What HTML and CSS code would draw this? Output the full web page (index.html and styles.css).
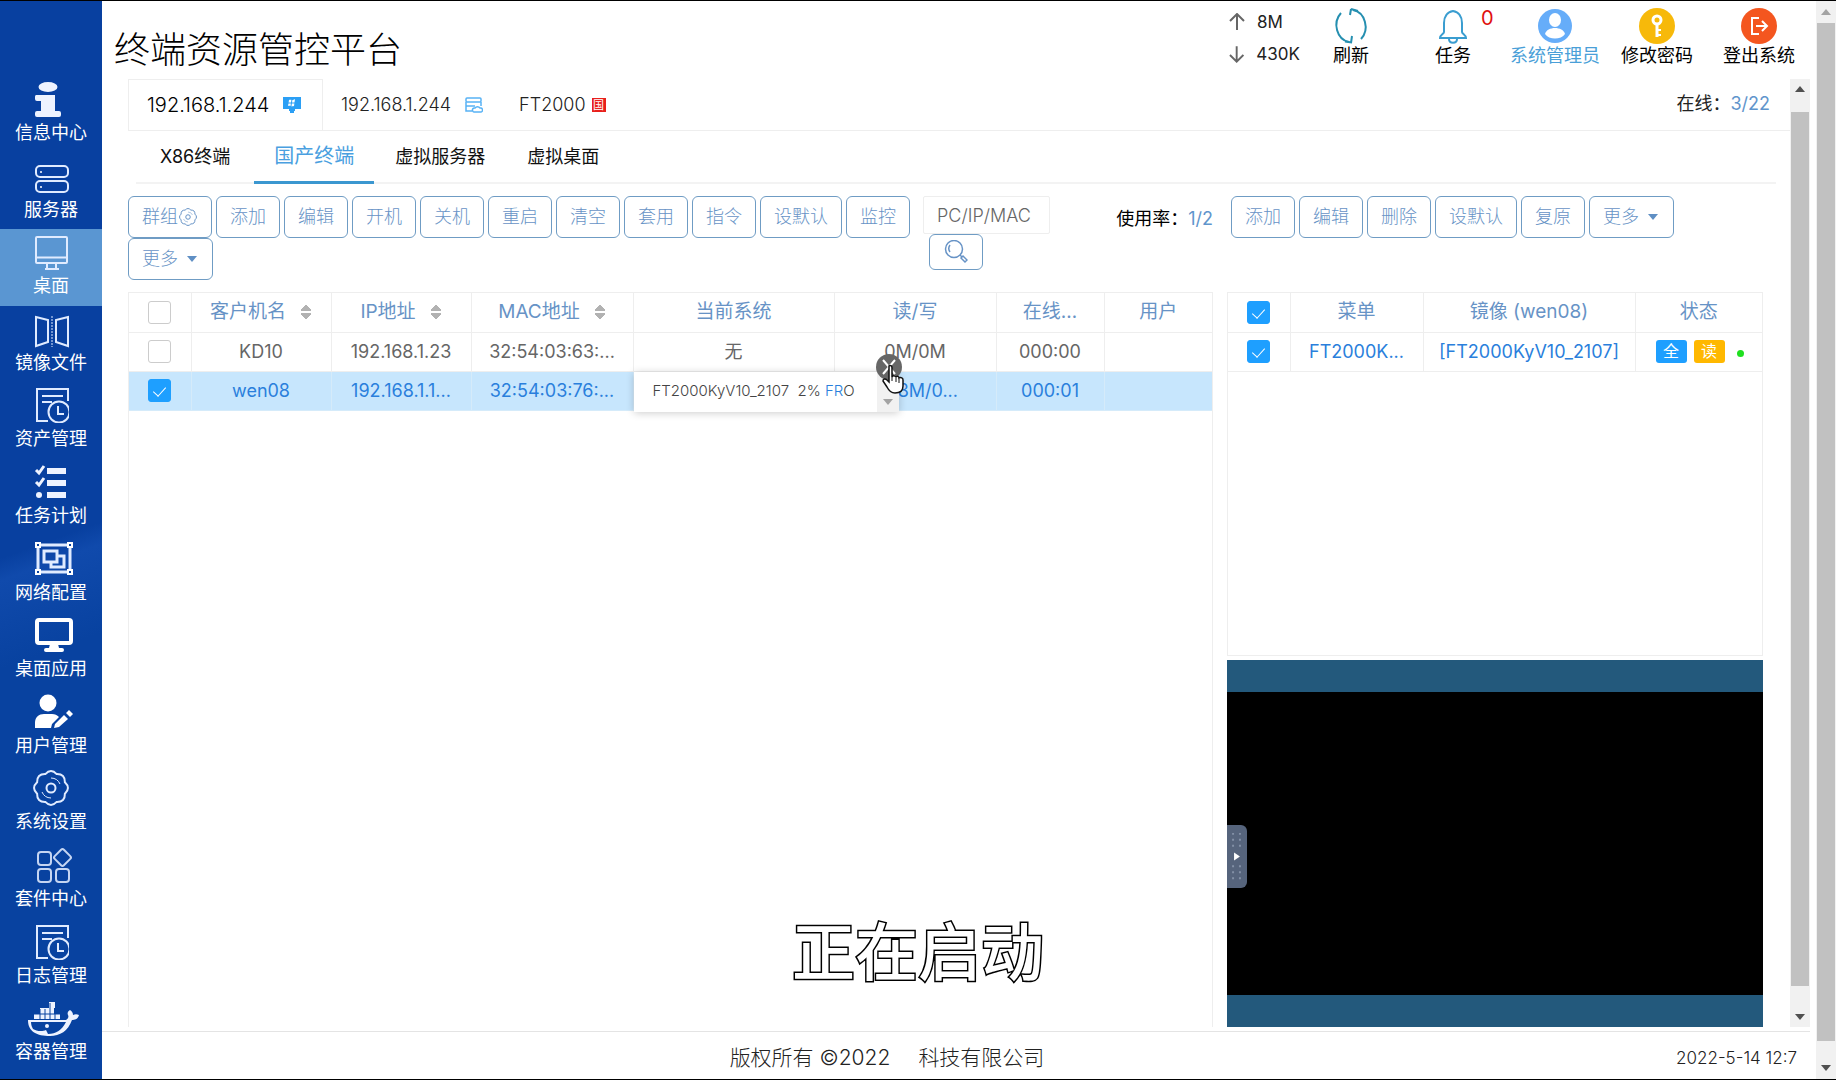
FILE: index.html
```html
<!DOCTYPE html>
<html lang="zh-CN">
<head>
    <meta charset="UTF-8">
    <meta name="viewport" content="width=device-width, initial-scale=1.0">
    <title>终端资源管控平台</title>
    <link rel="stylesheet" href="styles.css">
</head>
<body>

    <!-- shared icons -->
    <svg class="defs" aria-hidden="true">
        <symbol id="docClock" viewBox="0 0 36 36">
            <g fill="none" stroke="currentColor" stroke-width="2">
                <path d="M15 34H4V2h31v12M9 9h21M9 15h10"/>
                <circle cx="26" cy="25" r="10.5"/>
                <path d="M25 19v8h6"/>
            </g>
        </symbol>
        <symbol id="gear" viewBox="0 0 36 36">
            <g fill="none" stroke="currentColor" stroke-width="2">
                <path d="M31.900 12.300Q38 18 31.900 23.700Q32.100 32.100 23.700 31.900Q18 38 12.300 31.900Q3.900 32.100 4.100 23.700Q-2 18 4.100 12.300Q3.900 3.900 12.300 4.100Q18 -2 23.700 4.100Q32.100 3.900 31.900 12.300Z"/>
                <circle cx="18" cy="18" r="4.500"/>
                <path d="M18 8a10 10 0 0 1 9 6M18 28a10 10 0 0 1-9-6" stroke-width="1"/>
            </g>
        </symbol>
    </svg>

    <nav class="sidebar">
        <a href="#">
            <svg viewBox="0 0 36 36"><g fill="#eef3ff"><ellipse cx="15" cy="6" rx="9.500" ry="5"/><path d="M3 14h19v16h4a2 2 0 0 1 2 2v2a2 2 0 0 1-2 2H4a2 2 0 0 1-2-2v-2a2 2 0 0 1 2-2h4V20H4a2 2 0 0 1-2-2v-2a2 2 0 0 1 1-2z"/></g></svg>
            <span>信息中心</span>
        </a>
        <a href="#">
            <svg viewBox="0 0 36 36"><g fill="none" stroke="currentColor" stroke-width="2"><rect x="3" y="8" width="32" height="11" rx="4"/><rect x="3" y="23" width="32" height="11" rx="4"/></g><circle cx="8" cy="14" r="1"/><circle cx="8" cy="29" r="1"/></svg>
            <span>服务器</span>
        </a>
        <a href="#" class="active">
            <svg viewBox="0 0 36 36"><g fill="none" stroke="currentColor" stroke-width="2"><rect x="3" y="3" width="31" height="26" rx="1"/><path d="M3 23.500h31M14 29v5M23 29v5M12 35h14"/></g></svg>
            <span>桌面</span>
        </a>
        <a href="#">
            <svg viewBox="0 0 36 36"><g fill="none" stroke="currentColor" stroke-width="2"><path d="M3 6l12 3v22L3 35zM35 6L23 9v22l12 4z"/><path d="M19 5v31" stroke-width="1" stroke-dasharray="2 1"/></g></svg>
            <span>镜像文件</span>
        </a>
        <a href="#">
            <svg><use href="#docClock"/></svg>
            <span>资产管理</span>
        </a>
        <a href="#">
            <svg viewBox="0 0 36 36"><path d="M14 4h19v6H14zM14 16h19v6H14zM14 28h19v6H14z" fill="#eef3ff"/><path d="M3 6l3 3 5-7M3 18l3 3 5-7" fill="none" stroke="#eef3ff" stroke-width="3"/><circle cx="6" cy="31" r="3" fill="#eef3ff"/></svg>
            <span>任务计划</span>
        </a>
        <a href="#">
            <svg viewBox="0 0 36 36"><g fill="none" stroke="currentColor" stroke-width="3"><rect x="5" y="4" width="32" height="27"/><rect x="11" y="10" width="13" height="11"/><path d="M24 15h7v11H18v-5"/></g><path d="M2 1h6v6H2zM34 1h6v6h-6zM2 28h6v6H2zM34 28h6v6h-6z"/><path d="M4 3h2v2H4zM36 3h2v2h-2zM4 30h2v2H4zM36 30h2v2h-2z" fill="#0842a0"/></svg>
            <span>网络配置</span>
        </a>
        <a href="#">
            <svg viewBox="0 0 36 36"><rect x="4" y="3" width="34" height="23" rx="2" fill="none" stroke="#fff" stroke-width="4"/><path d="M17 27h8l1 4h3a2 2 0 0 1 0 4H13a2 2 0 0 1 0-4h3z"/></svg>
            <span>桌面应用</span>
        </a>
        <a href="#">
            <svg viewBox="0 0 36 36"><circle cx="15" cy="9" r="8.500"/><path d="M2 34v-5c0-6 4-9 9-9h8c3 0 5 1 7 3l-7 7-1 4zM21 34l1-4 9-9 4 4-9 8zM33 19l3-3 4 4-3 3z"/></svg>
            <span>用户管理</span>
        </a>
        <a href="#">
            <svg class="low"><use href="#gear"/></svg>
            <span>系统设置</span>
        </a>
        <a href="#">
            <svg viewBox="0 0 36 36"><g fill="none" stroke="#c5d5f2" stroke-width="2"><rect x="5" y="5" width="13" height="13" rx="3"/><rect x="5" y="22" width="13" height="13" rx="3"/><rect x="23" y="22" width="13" height="13" rx="3"/><rect x="23" y="4" width="13" height="13" rx="2" transform="rotate(45 29.500 10.500)"/></g></svg>
            <span>套件中心</span>
        </a>
        <a href="#">
            <svg><use href="#docClock"/></svg>
            <span>日志管理</span>
        </a>
        <a href="#">
            <svg viewBox="0 0 36 36"><path d="M-5 20h38c2-1 3-3 2-5-1-2 0-4 2-5 2 1 3 3 3 5 2-1 4-1 6 0-1 4-4 5-7 5-4 11-12 16-22 16C4 36-5 32-5 20z" fill="#eef3ff"/><path d="M1 14h26v5H1zM7 8h14v6H7zM16 2h6v6h-6z" fill="#eef3ff"/><path d="M7 9v10M12 9v10M17 3v16M22 9v10M1 14h26" stroke="#0842a0" stroke-width="1"/><path d="M-2 22h35c-4 8-10 12-18 12l-2-4c-4 2-10 1-13-1-1-2-2-4-2-7z" fill="#0842a0"/><circle cx="14" cy="26" r="2" fill="#eef3ff"/></svg>
            <span>容器管理</span>
        </a>
    </nav>

    <div class="main">
        <header class="header">
            <h1>终端资源管控平台</h1>
            <div class="speed">
                <div><svg viewBox="0 0 16 18"><path d="M8 17V2M1 8l7-7 7 7"/></svg>8M</div>
                <div><svg viewBox="0 0 16 18"><path d="M8 1v15M1 10l7 7 7-7"/></svg>430K</div>
            </div>
            <div class="tools">
                <a href="#">
                    <svg viewBox="0 0 36 36"><g fill="none" stroke="#258fb0" stroke-width="2"><path d="M8 5A15 17 0 0 0 16 34M28 31A15 17 0 0 0 20 2"/><path d="M18 35l1-7M12 33.500l7 1M18 1l-1 6M18 1l7 2"/></g></svg>
                    <span>刷新</span>
                </a>
                <a href="#">
                    <svg viewBox="0 0 36 36"><g fill="none" stroke="#3a9dd0" stroke-width="2"><path d="M18 3c-6 1-9 6-9 12v9c0 2-4 3-4 6h26c0-3-4-4-4-6v-9c0-6-3-11-9-12zM14 31c0 5 8 5 8 0"/></g></svg>
                    <span>任务</span>
                    <em class="badge">0</em>
                </a>
                <a href="#" class="admin">
                    <svg viewBox="0 0 36 36"><circle cx="18" cy="18" r="17" fill="#66adf9"/><ellipse cx="18" cy="12" rx="6" ry="7" fill="#fff"/><path d="M8 26c2-8 18-8 20 0-4 6-16 6-20 0z" fill="#fff"/></svg>
                    <span>系统管理员</span>
                </a>
                <a href="#">
                    <svg viewBox="0 0 36 36"><circle cx="18" cy="18" r="18" fill="#f7b90a"/><circle cx="18" cy="12" r="4" fill="none" stroke="#fff" stroke-width="3"/><path d="M18 16v13" stroke="#fff" stroke-width="3"/><path d="M18 22h4M18 27h4" stroke="#fff" stroke-width="2"/></svg>
                    <span>修改密码</span>
                </a>
                <a href="#">
                    <svg viewBox="0 0 36 36"><circle cx="18" cy="18" r="18" fill="#f4561f"/><path d="M18 10h-7v16h7M15 18h11M21 13l5 5-5 5" fill="none" stroke="#fff" stroke-width="2"/></svg>
                    <span>登出系统</span>
                </a>
            </div>
        </header>

        <div class="scroller">
            <div class="content">
                <div class="servers">
                    <a href="#" class="current">192.168.1.244
                        <svg viewBox="0 0 18 16"><path d="M0 0h18v12h-6v2h-1v2H7v-2H6v-2H0z" fill="#2b9ff5"/><path d="M6 3c2-1 3 1 6-1l-1 7c-3 1-4-1-6 0z" fill="#fff"/><path d="M9 2l-1 7M5 6h7" stroke="#2b9ff5" stroke-width="1"/></svg>
                    </a>
                    <a href="#">192.168.1.244
                        <svg viewBox="0 0 18 16"><g fill="none" stroke="#58b2f5" stroke-width="1.500"><rect x="1" y="1" width="15" height="4" rx="1"/><path d="M16 5v4M1 5v4h9M1 9v5h6"/><path d="M9 15a2 2 0 0 1 1-4 3 3 0 0 1 5 0 2 2 0 0 1 1 4z"/></g></svg>
                    </a>
                    <a href="#" class="plain">FT2000 <b class="flag">国</b></a>
                    <div class="online">在线：<span>3/22</span></div>
                </div>

                <div class="subtabs">
                    <a href="#">X86终端</a>
                    <a href="#" class="current">国产终端</a>
                    <a href="#">虚拟服务器</a>
                    <a href="#">虚拟桌面</a>
                </div>

                <div class="panels">
                    <section class="left">
                        <div class="toolbar">
                            <div class="buttons">
                                <button>群组<svg><use href="#gear"/></svg></button>
                                <button>添加</button>
                                <button>编辑</button>
                                <button>开机</button>
                                <button>关机</button>
                                <button>重启</button>
                                <button>清空</button>
                                <button>套用</button>
                                <button>指令</button>
                                <button>设默认</button>
                                <button>监控</button>
                                <button>更多<i class="caret"></i></button>
                            </div>
                            <div class="search">
                                <input type="text" placeholder="PC/IP/MAC" aria-label="PC/IP/MAC">
                                <button aria-label="搜索"><svg viewBox="0 0 24 24"><g fill="none" stroke="currentColor" stroke-width="1.500"><circle cx="10" cy="9" r="8.500"/><path d="M6 12a6 6 0 0 1 0-7M16 15l2 2"/><path d="M17 18l2-2 4 4-2 2z"/></g></svg></button>
                            </div>
                            <div class="usage">使用率：<span>1/2</span></div>
                        </div>
                        <div class="table-box">
                            <table class="clients">
                                <colgroup><col class="c-check"><col class="c-name"><col class="c-name"><col class="c-mac"><col class="c-system"><col class="c-mac"><col class="c-time"><col class="c-time"></colgroup>
                                <thead>
                                    <tr>
                                        <th><input type="checkbox" aria-label="全选"></th>
                                        <th>客户机名<i class="sort"></i></th>
                                        <th>IP地址<i class="sort"></i></th>
                                        <th>MAC地址<i class="sort"></i></th>
                                        <th>当前系统</th>
                                        <th>读/写</th>
                                        <th>在线…</th>
                                        <th>用户</th>
                                    </tr>
                                </thead>
                                <tbody>
                                    <tr>
                                        <td><input type="checkbox" aria-label="KD10"></td>
                                        <td>KD10</td>
                                        <td>192.168.1.23</td>
                                        <td>32:54:03:63:...</td>
                                        <td>无</td>
                                        <td>0M/0M</td>
                                        <td>000:00</td>
                                        <td></td>
                                    </tr>
                                    <tr class="selected">
                                        <td><input type="checkbox" aria-label="wen08" checked></td>
                                        <td>wen08</td>
                                        <td>192.168.1.1...</td>
                                        <td>32:54:03:76:...</td>
                                        <td class="tip-cell">
                                            <div class="tip">
                                                <p>FT2000KyV10_2107&nbsp; 2% <span>FR</span>O</p>
                                                <div class="tip-scroll"></div>
                                                <button class="close" aria-label="关闭"><svg viewBox="0 0 26 26"><path d="M7 6l12 14M19 6L7 20" stroke="#fff" stroke-width="2"/></svg></button>
                                                <svg class="cursor" viewBox="0 0 24 30"><path d="M8 2c2-1 3 0 3 2v9c1-2 3-1 4 0 1-1 3-1 3 1 2-1 4 0 4 2v6c0 5-3 7-8 7-4 0-6-2-8-6l-4-6c0-2 2-3 4-1l2 2V4c0-1 0-2 0-2z" fill="#fff" stroke="#111" stroke-width="1.500"/><path d="M11 13v4M15 14v4M18 15v4" stroke="#111"/></svg>
                                            </div>
                                        </td>
                                        <td>1128M/0...</td>
                                        <td>000:01</td>
                                        <td></td>
                                    </tr>
                                </tbody>
                            </table>
                        </div>
                    </section>

                    <section class="right">
                        <div class="toolbar">
                            <div class="buttons">
                                <button>添加</button>
                                <button>编辑</button>
                                <button>删除</button>
                                <button>设默认</button>
                                <button>复原</button>
                                <button>更多<i class="caret"></i></button>
                            </div>
                        </div>
                        <div class="table-box">
                            <table class="images">
                                <colgroup><col class="c-check"><col class="c-menu"><col class="c-image"><col class="c-state"></colgroup>
                                <thead>
                                    <tr>
                                        <th><input type="checkbox" aria-label="全选" checked></th>
                                        <th>菜单</th>
                                        <th>镜像 (wen08)</th>
                                        <th>状态</th>
                                    </tr>
                                </thead>
                                <tbody>
                                    <tr>
                                        <td><input type="checkbox" aria-label="FT2000K" checked></td>
                                        <td><a href="#">FT2000K...</a></td>
                                        <td><a href="#">[FT2000KyV10_2107]</a></td>
                                        <td><span class="state"><b>全</b><b class="read">读</b><i></i></span></td>
                                    </tr>
                                </tbody>
                            </table>
                        </div>
                        <div class="screen">
                            <button class="handle" aria-label="展开"><svg viewBox="0 0 20 64"><path d="M7 28v8l6-4z" fill="#fff"/><path d="M6 8v14M13 8v14M6 41v14M13 41v14" stroke="#8390a6" stroke-width="2" stroke-dasharray="2 4"/></svg></button>
                        </div>
                    </section>
                </div>
            </div>
            <div class="scrollbar"><i class="up"></i><div class="thumb"></div><i class="down"></i></div>
        </div>

        <footer class="footer">
            <p><span>版权所有 ©2022</span><span>科技有限公司</span></p>
            <time>2022-5-14 12:7</time>
        </footer>
    </div>

    <div class="scrollbar page"><i class="up"></i><div class="thumb"></div><i class="down"></i></div>

    <div class="caption">正在启动</div>

</body>
</html>
```
FILE: styles.css
```css
* { margin: 0; padding: 0; box-sizing: border-box; }
body { display: flex; height: 100vh; overflow: hidden; border-top: 1px solid #000; border-bottom: 1px solid #000; background: #fff; color: #222; font: 400 18px/24px Inter, "Noto Sans CJK SC", sans-serif; }
a { color: inherit; text-decoration: none; }
em, i { font-style: normal; }
button, input { font: inherit; }
button { cursor: pointer; }
.defs { position: absolute; width: 0; height: 0; }

/* sidebar */
.sidebar { flex: none; width: 102px; display: flex; flex-direction: column; padding: 75px 0 7px; color: #fff; background: linear-gradient(160deg, #0840a0 50%, #104aac 52%, #0842a0 60%); }
.sidebar a { flex: 1; display: flex; flex-direction: column; align-items: center; padding-top: 5px; }
.sidebar a.active { background: #5a96d2; }
.sidebar svg { width: 36px; height: 36px; overflow: visible; color: #e0ebff; fill: #fff; }
.sidebar span { line-height: 32px; white-space: nowrap; }

.main { flex: 1; min-width: 0; display: flex; flex-direction: column; }

/* header */
.header { display: flex; height: 78px; padding-right: 6px; }
.header h1 { flex: 1; padding-left: 12px; font-size: 36px; line-height: 98px; font-weight: 300; color: #000; }
.speed { display: flex; flex-direction: column; gap: 8px; padding-top: 9px; width: 71px; font-size: 17px; }
.speed div { display: flex; align-items: center; gap: 12px; }
.speed svg { width: 16px; height: 18px; fill: none; stroke: #666; stroke-width: 2; }
.tools { display: grid; grid-template-columns: repeat(5, 102px); color: #000; }
.tools a { position: relative; display: flex; flex-direction: column; align-items: center; padding-top: 7px; white-space: nowrap; }
.tools svg { width: 36px; height: 36px; }
.tools .admin { color: #4a9fd8; }
.badge { position: absolute; top: 5px; left: 79px; color: #e01010; font-size: 20px; }

/* scroll area */
.scroller { flex: 1; min-height: 0; display: flex; margin-right: 6px; }
.content { flex: 1; min-width: 0; display: flex; flex-direction: column; padding-left: 26px; }
.scrollbar { flex: none; width: 20px; display: flex; flex-direction: column; align-items: center; gap: 12px; padding: 7px 0; background: #f1f1f1; }
.scrollbar .thumb { width: 18px; background: #c1c1c1; flex: 1; margin: 8px 0 16px; }
.up, .down { border: 5px solid transparent; }
.up { border-top: 0; border-bottom: 6px solid #505050; }
.down { border-bottom: 0; border-top: 6px solid #505050; }
.page { gap: 8px; padding: 8px 0; }
.page .thumb { margin: 0 0 16px; }
.page .up { border-bottom-color: #a3a3a3; }

.servers { display: flex; height: 52px; border-bottom: 1px solid #eee; }
.servers a { display: flex; align-items: center; gap: 14px; padding: 0 18px; white-space: nowrap; font-weight: 300; }
.servers a.current { width: 195px; border: 1px solid #eee; border-bottom: 0; font-size: 20px; color: #000; }
.servers a.plain { gap: 6px; }
.servers svg { width: 18px; height: 16px; }
.flag { width: 14px; height: 14px; font-size: 11px; line-height: 14px; text-align: center; color: #fff; background: #e8201c; }
.online { margin-left: auto; padding-right: 20px; line-height: 50px; }
.online span, .usage span { color: #5f95cc; }

.subtabs { display: flex; height: 53px; margin: 0 14px 0 8px; border-bottom: 2px solid #f3f3f3; color: #111; }
.subtabs a { padding: 0 24px; line-height: 51px; }
.subtabs a + a + a { padding: 0 21px; }
.subtabs a.current { height: 53px; padding: 0 20px; border-bottom: 3px solid #3b97d0; color: #4a9fe0; font-size: 20px; }

/* panels */
.panels { flex: 1; min-height: 0; display: grid; grid-template-columns: 1085fr 536fr; column-gap: 14px; padding: 12px 27px 0 0; }
.left, .right { min-width: 0; display: flex; flex-direction: column; }
.toolbar { display: flex; height: 96px; flex: none; }
.buttons { display: flex; flex-wrap: wrap; align-content: flex-start; gap: 0 4px; }
.left .buttons { width: 795px; }
.right .buttons { padding-left: 4px; }
.toolbar button { display: flex; align-items: center; height: 42px; padding: 0 13px; border: 1px solid #6f9cc4; border-radius: 6px; background: #fff; color: #6793c6; white-space: nowrap; font-weight: 300; }
.buttons svg { width: 20px; height: 18px; }
.caret { margin: 0 2px 0 9px; border: 5px solid transparent; border-top: 6px solid #5f8fc4; border-bottom: 0; }
.search input { display: block; width: 127px; height: 38px; padding: 0 13px; border: 1px solid #eee; border-radius: 2px; color: #444; font-weight: 300; }
.search input::placeholder { color: #666; }
.toolbar .search button { height: 36px; margin-left: 6px; padding: 0 14px; }
.search svg { width: 24px; height: 24px; }
.usage { margin-left: auto; line-height: 46px; color: #000; white-space: nowrap; }

/* tables */
.table-box { flex: 1; min-height: 0; border: 1px solid #eee; border-bottom: 0; }
table { width: 100%; table-layout: fixed; border-collapse: collapse; }
th, td { height: 39px; border-right: 1px solid #eee; border-bottom: 1px solid #eee; text-align: center; white-space: nowrap; font-weight: 400; color: #666; }
th:last-child, td:last-child { border-right: 0; }
th { font-size: 19px; color: #6793c6; }
.c-check { width: 62px; }
.clients .c-name { width: 140px; }
.clients .c-mac { width: 162px; }
.clients .c-system { width: 201px; }
.c-menu { width: 133px; }
.c-state { width: 127px; }
.sort { display: inline-block; width: 12px; height: 16px; margin-left: 14px; vertical-align: -2px; background: conic-gradient(from 140deg at 50% 0, #b2b2b2 80deg, transparent 0) 0 0 / 12px 7px no-repeat, conic-gradient(from -40deg at 50% 100%, #b2b2b2 80deg, transparent 0) 0 9px / 12px 7px no-repeat; }
.selected td { background: #c7e6fd; color: #2a7fdc; border-color: #d5ebfa; }
.images td a { color: #2a7fdc; }
input[type="checkbox"] { display: block; appearance: none; position: relative; width: 23px; height: 23px; margin: 0 auto; border: 1px solid #ccc; border-radius: 3px; background: #fff; }
input[type="checkbox"]:checked { border-color: #1e9fff; background: #1e9fff; }
input[type="checkbox"]:checked::after { content: ""; position: absolute; left: 7px; top: 4px; width: 6px; height: 11px; border: solid #fff; border-width: 0 1px 1px 0; transform: rotate(42deg); }
.state { display: flex; align-items: center; gap: 7px; padding-left: 20px; }
.state b { width: 31px; height: 23px; border-radius: 3px; background: #1e9fff; color: #fff; font-size: 16px; font-weight: 400; line-height: 22px; }
.state .read { background: #ffb800; }
.state i { width: 7px; height: 7px; margin: 4px 0 0 5px; border-radius: 50%; background: #1fe01f; }

/* floating tip over the row */
.tip-cell { position: relative; }
.tip { position: absolute; z-index: 2; left: 0; top: 0; width: 265px; height: 40px; display: flex; background: #fff; box-shadow: 0 1px 8px rgba(0, 0, 0, 0.2); }
.tip p { flex: 1; padding-left: 19px; text-align: left; font-size: 15px; line-height: 38px; font-weight: 300; color: #444; }
.tip span { color: #2a7fdc; }
.tip-scroll { width: 22px; background: #f1f1f1; }
.tip-scroll::after { content: ""; display: block; margin: 27px auto 0; width: 0; border: 5px solid transparent; border-top: 6px solid #a3a3a3; border-bottom: 0; }
.close { position: absolute; right: -3px; top: -18px; width: 26px; height: 26px; border: 0; border-radius: 50%; background: #666; }
.cursor { position: absolute; right: -6px; top: -8px; width: 24px; height: 30px; }

/* remote screen */
.right .table-box { margin-bottom: 4px; border-bottom: 1px solid #eee; }
.screen { position: relative; height: 367px; background: #000; border: solid #23597c; border-width: 32px 0; }
.handle { position: absolute; left: 0; top: 133px; width: 20px; height: 63px; border: 0; border-radius: 0 6px 6px 0; background: #56647c; }
.handle svg { display: block; width: 20px; height: 63px; }

.footer { position: relative; height: 48px; margin-top: 4px; margin-right: 6px; padding-top: 4px; border-top: 1px solid #e4e4e4; display: flex; align-items: center; justify-content: center; font-size: 21px; font-weight: 300; }
.footer p { display: flex; gap: 28px; padding-right: 138px; }
.footer time { position: absolute; right: 13px; font-size: 17px; }

.caption { position: absolute; left: 0; right: 0; bottom: 84px; text-align: center; color: #fff; font-size: 63px; font-weight: 500; line-height: 88px; -webkit-text-stroke: 3px #000; paint-order: stroke fill; pointer-events: none; }
```
